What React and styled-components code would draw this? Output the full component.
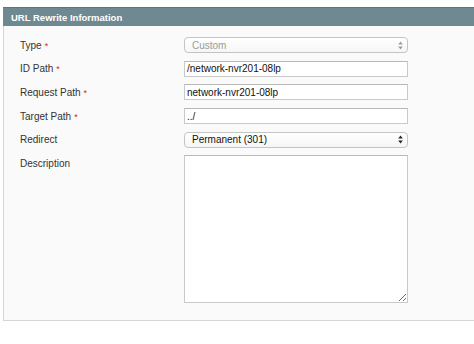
import React from "react";
import styled, { createGlobalStyle } from "styled-components";

const GlobalStyle = createGlobalStyle`
  html, body {
    margin: 0;
    padding: 0;
    background: #ffffff;
    font-family: "Liberation Sans", Arial, sans-serif;
  }
`;

const Page = styled.div`
  padding: 7px 0 0 3px;
  width: 471px;
`;

const Header = styled.div`
  height: 18px;
  background: #6f8992;
  border-top: 1px solid #5d747c;
  display: flex;
  align-items: center;
  padding-left: 8px;
  color: #ffffff;
  font-weight: bold;
  font-size: 9.5px;
`;

const Panel = styled.div`
  background: #fafafa;
  border-left: 1px solid #d6d6d6;
  border-bottom: 1px solid #d6d6d6;
  padding: 11px 0 17px 16px;
  display: flex;
  flex-direction: column;
  gap: 7.7px;
`;

const Row = styled.div`
  display: flex;
  align-items: ${(p) => (p.top ? "flex-start" : "center")};
`;

const Label = styled.div`
  width: 164px;
  font-size: 10px;
  color: #333333;
  padding-top: ${(p) => (p.top ? "3px" : "0")};
`;

const Star = styled.span`
  color: #e41b0c;
  font-size: 9px;
  margin-left: 3px;
`;

const Input = styled.div`
  box-sizing: border-box;
  width: 224px;
  height: 16px;
  background: #ffffff;
  border: 1px solid #c9c9c9;
  border-top-color: #b8b8b8;
  font-size: 10px;
  color: #111111;
  display: flex;
  align-items: center;
  padding-left: 2px;
`;

const Select = styled.div`
  box-sizing: border-box;
  width: 224px;
  height: 16px;
  background: linear-gradient(#ffffff, #f6f6f6);
  border: 1px solid #c4c4c4;
  border-radius: 4px;
  font-size: 10px;
  color: ${(p) => (p.disabled ? "#9a9a9a" : "#111111")};
  display: flex;
  align-items: center;
  justify-content: space-between;
  padding: 0 4px 0 7px;
`;

const TextArea = styled.textarea`
  box-sizing: border-box;
  width: 224px;
  height: 148px;
  margin: 0;
  border: 1px solid #c9c9c9;
  border-top-color: #b8b8b8;
  background: #ffffff;
  font-family: "Liberation Sans", Arial, sans-serif;
  font-size: 10px;
  outline: none;
`;

const Arrows = ({ color }) => (
  <svg width="5" height="9" viewBox="0 0 5 9">
    <path d="M2.5 0.5 L4.8 3.6 H0.2 Z" fill={color} />
    <path d="M2.5 8.5 L4.8 5.4 H0.2 Z" fill={color} />
  </svg>
);

const Req = () => <Star>*</Star>;

export default function App() {
  return (
    <>
      <GlobalStyle />
      <Page>
        <Header>URL Rewrite Information</Header>
        <Panel>
          <Row>
            <Label>
              Type<Req />
            </Label>
            <Select disabled>
              Custom
              <Arrows color="#9c9c9c" />
            </Select>
          </Row>
          <Row>
            <Label>
              ID Path<Req />
            </Label>
            <Input>/network-nvr201-08lp</Input>
          </Row>
          <Row>
            <Label>
              Request Path<Req />
            </Label>
            <Input>network-nvr201-08lp</Input>
          </Row>
          <Row>
            <Label>
              Target Path<Req />
            </Label>
            <Input>../</Input>
          </Row>
          <Row>
            <Label>Redirect</Label>
            <Select>
              Permanent (301)
              <Arrows color="#222222" />
            </Select>
          </Row>
          <Row top>
            <Label top>Description</Label>
            <TextArea />
          </Row>
        </Panel>
      </Page>
    </>
  );
}
